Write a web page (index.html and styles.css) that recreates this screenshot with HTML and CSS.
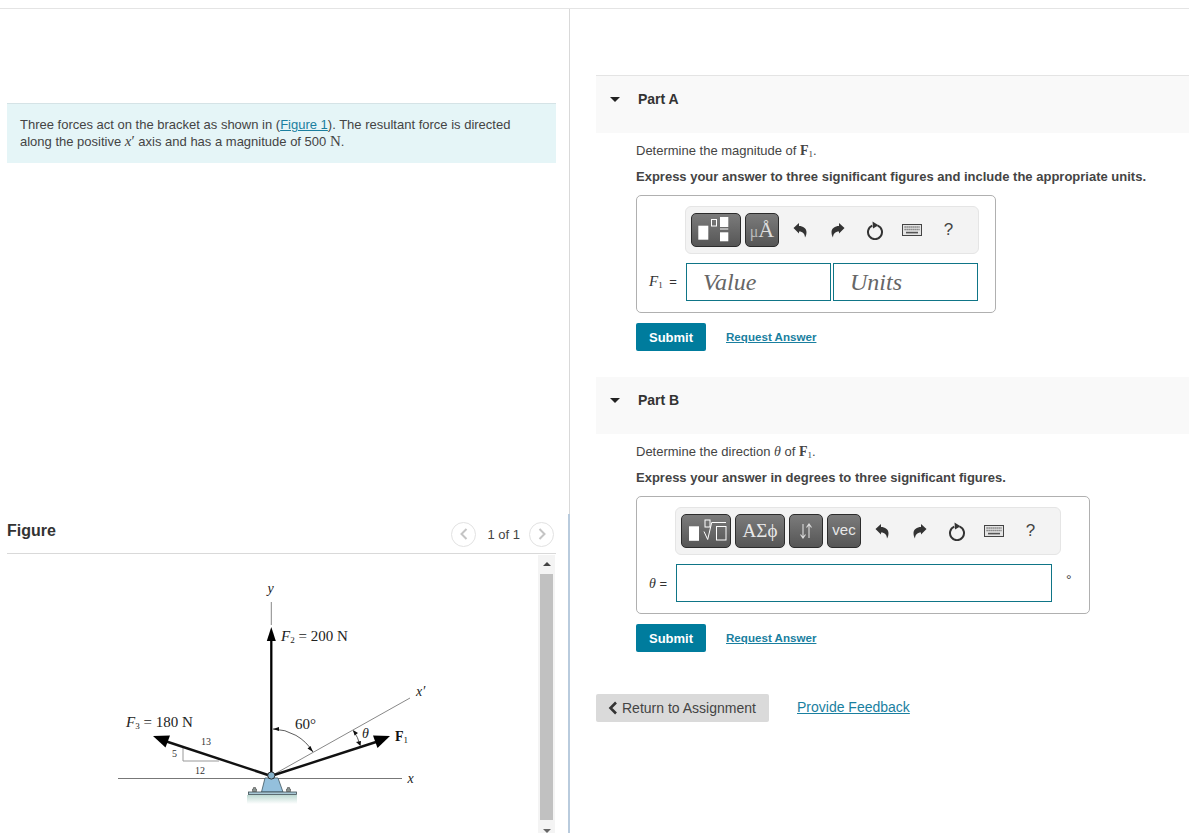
FILE: index.html
```html
<!DOCTYPE html>
<html lang="en">
<head>
<meta charset="utf-8">
<title>Three forces on a bracket</title>
<link rel="stylesheet" href="styles.css">
</head>
<body>
<svg class="defs" width="0" height="0" aria-hidden="true">
  <symbol id="i-undo" viewBox="0 0 14 16"><path d="M0.5 6 L6 1 V4 C10 4 13.500 6.500 13.500 10 C13.500 12 13 14 12 15.500 C11.800 12 10 9.500 6 9.500 V11.500 Z" fill="#333"/></symbol>
  <symbol id="i-redo" viewBox="0 0 14 16"><path d="M13.500 6 L8 1 V4 C4 4 0.500 6.500 0.500 10 C0.500 12 1 14 2 15.500 C2.200 12 4 9.500 8 9.500 V11.500 Z" fill="#333"/></symbol>
  <symbol id="i-reset" viewBox="0 0 18 19"><path d="M6.300 4.700 A7 7 0 1 0 11.700 4.700" fill="none" stroke="#333" stroke-width="2"/><path d="M6.500 0.600 L12.500 4.300 L7 7.400 Z" fill="#333"/></symbol>
  <symbol id="i-kb" viewBox="0 0 20 12"><rect x="0.500" y="0.500" width="19" height="11" fill="#e4e4e4" stroke="#444"/><path d="M2.500 3 H17.500 M2.500 5.500 H17.500" stroke="#666" stroke-width="1.400" stroke-dasharray="1.200 .8"/><path d="M4 8.600 H16" stroke="#555" stroke-width="1.600"/></symbol>
</svg>
<div class="page">
  <section class="left">
    <div class="intro">Three forces act on the bracket as shown in (<a class="link" href="#fig">Figure 1</a>). The resultant force is directed along the positive <span class="math prime"><i>x</i>′</span> axis and has a magnitude of 500 <span class="math big">N</span>.</div>
    <div class="fig-head">
      <h2 class="fig-title">Figure</h2>
      <div class="pager">
        <span class="circle"><svg width="8" height="12" viewBox="0 0 8 12"><path d="M6.500 1 L1.500 6 L6.500 11" fill="none" stroke="#c4c4c4" stroke-width="2"/></svg></span>
        <span class="pager-text">1 of 1</span>
        <span class="circle"><svg width="8" height="12" viewBox="0 0 8 12"><path d="M1.500 1 L6.500 6 L1.500 11" fill="none" stroke="#c4c4c4" stroke-width="2"/></svg></span>
      </div>
    </div>
    <div class="fig-body" id="fig">
      <svg class="diagram" width="533" height="279" viewBox="7 554 533 279">
        <defs><linearGradient id="shadow" x1="0" y1="0" x2="0" y2="1"><stop offset="0" stop-color="#bcd9d2"/><stop offset="1" stop-color="#ffffff"/></linearGradient></defs>
        <path d="M271.300 602 V625" stroke="#888" stroke-width="1"/>
        <path d="M118 778.500 H402" stroke="#777" stroke-width="1"/>
        <path d="M271 776 L410 698" stroke="#888" stroke-width="1"/>
        <path d="M183 748 V761 H219" fill="none" stroke="#999" stroke-width="1"/>
        <path d="M273 729 A48 48 0 0 1 313 752" fill="none" stroke="#333" stroke-width="0.800"/>
        <path d="M273 729 L279 727 L279 731 Z M313 752 L307.500 748.500 L310.500 746 Z" fill="#111"/>
        <path d="M353.500 731 Q358 737 360 745" fill="none" stroke="#333" stroke-width="0.800"/>
        <path d="M353 730 L358 733 L354.500 735.500 Z M360.500 746 L356 742 L361 741 Z" fill="#111"/>
        <path d="M271.300 776 V638" stroke="#000" stroke-width="2.300"/>
        <path d="M271.300 627 L275.800 641 H266.800 Z" fill="#000"/>
        <path d="M271 776 L165 741" stroke="#111" stroke-width="2.400"/>
        <path d="M153 736 L170 735.500 L165.500 747.500 Z" fill="#000"/>
        <path d="M271 776 L376 742" stroke="#111" stroke-width="2.400"/>
        <path d="M390 736 L373 735.500 L377.500 748 Z" fill="#000"/>
        <rect x="247" y="795" width="50" height="9" fill="url(#shadow)"/>
        <path d="M265 778 H278 L283 792 H261.500 Z" fill="#94c0dc" stroke="#3d5560" stroke-width="0.800"/>
        <rect x="248.500" y="792" width="48" height="2.500" fill="#a9c9d6" stroke="#3f4f55" stroke-width="0.800"/>
        <path d="M252.500 791.500 V789 H253.500 V787.500 H255.500 V789 H256.500 V791.500 Z M286.500 791.500 V789 H287.500 V787.500 H289.500 V789 H290.500 V791.500 Z" fill="#8b9692" stroke="#333" stroke-width="0.500"/>
        <circle cx="271.300" cy="775.500" r="3.600" fill="#86b3cc" stroke="#222" stroke-width="0.900"/>
        <text class="d-i" x="267.500" y="593">y</text>
        <text class="d-t" x="281" y="641"><tspan class="d-it">F</tspan><tspan class="d-sub" dy="2">2</tspan><tspan dy="-2"> = 200 N</tspan></text>
        <text class="d-t" x="126" y="727"><tspan class="d-it">F</tspan><tspan class="d-sub" dy="2">3</tspan><tspan dy="-2"> = 180 N</tspan></text>
        <text class="d-s" x="201" y="745">13</text>
        <text class="d-s" x="172" y="757">5</text>
        <text class="d-s" x="195" y="774">12</text>
        <text class="d-t" x="295" y="729">60°</text>
        <text class="d-i" x="362" y="738">θ</text>
        <text class="d-b" x="395" y="741">F<tspan class="d-sub" dy="2">1</tspan></text>
        <text class="d-i" x="416" y="696">x′</text>
        <text class="d-i" x="407.500" y="783">x</text>
      </svg>
      <div class="scrollbar">
        <span class="sb-up"></span>
        <span class="sb-thumb"></span>
        <span class="sb-down"></span>
      </div>
    </div>
  </section>

  <section class="right">
    <div class="part-head part-a"><span class="caret"></span><h3 class="part-title">Part A</h3></div>
    <p class="q">Determine the magnitude of <b class="math lg">F</b><span class="math sub">1</span>.</p>
    <p class="q-b">Express your answer to three significant figures and include the appropriate units.</p>
    <div class="answer answer-a">
      <div class="toolbar tb-a">
        <button class="tbtn w50" type="button" aria-label="templates">
          <svg width="48" height="32" viewBox="0 0 48 32"><rect x="6.300" y="11.700" width="10" height="14" fill="#fff"/><rect x="19.500" y="5.500" width="5" height="6.500" fill="none" stroke="#fff"/><rect x="28" y="3" width="8.300" height="10" fill="#fff"/><path d="M28 15 H36.300" stroke="#fff"/><rect x="28" y="18.300" width="8.300" height="9" fill="#fff"/></svg>
        </button>
        <button class="tbtn w34 serif" type="button"><span class="mu">μ</span><span class="ang">Å</span></button>
        <span class="slot s38"><svg width="14" height="16"><use href="#i-undo"/></svg></span>
        <span class="slot s38"><svg width="14" height="16"><use href="#i-redo"/></svg></span>
        <span class="slot s36"><svg width="18" height="19"><use href="#i-reset"/></svg></span>
        <span class="slot s37"><svg width="20" height="12"><use href="#i-kb"/></svg></span>
        <span class="slot s37 help">?</span>
      </div>
      <div class="row row-a">
        <span class="lbl"><i class="math xl">F</i><span class="math sub">1</span> =</span>
        <input class="field value" type="text" placeholder="Value" aria-label="Value">
        <input class="field units" type="text" placeholder="Units" aria-label="Units">
      </div>
    </div>
    <div class="actions">
      <button class="submit" type="button">Submit</button>
      <a class="request" href="#a">Request Answer</a>
    </div>

    <div class="part-head part-b"><span class="caret"></span><h3 class="part-title">Part B</h3></div>
    <p class="q">Determine the direction <i class="math lg">θ</i> of <b class="math lg">F</b><span class="math sub">1</span>.</p>
    <p class="q-b">Express your answer in degrees to three significant figures.</p>
    <div class="answer answer-b">
      <div class="toolbar tb-b">
        <button class="tbtn w50" type="button" aria-label="templates">
          <svg width="48" height="32" viewBox="0 0 48 32"><rect x="7" y="11.300" width="10" height="14.500" fill="#fff"/><rect x="23" y="5" width="5" height="7" fill="none" stroke="#fff"/><path d="M22 16.500 L25.700 24.500 L29.700 7.500 H44" fill="none" stroke="#fff"/><rect x="34.500" y="11.500" width="9.500" height="13.500" fill="none" stroke="#fff"/></svg>
        </button>
        <button class="tbtn w50 serif greek" type="button">ΑΣϕ</button>
        <button class="tbtn w34" type="button" aria-label="arrows">
          <svg width="14" height="16" viewBox="0 0 14 16"><path d="M4 1 V14 M1.500 11.500 L4 15 L6.500 11.500 M10 15 V2 M7.500 4.500 L10 1 L12.500 4.500" fill="none" stroke="#ddd" stroke-width="1.100"/></svg>
        </button>
        <button class="tbtn w34 vec" type="button">vec</button>
        <span class="slot s38"><svg width="14" height="16"><use href="#i-undo"/></svg></span>
        <span class="slot s38"><svg width="14" height="16"><use href="#i-redo"/></svg></span>
        <span class="slot s36"><svg width="18" height="19"><use href="#i-reset"/></svg></span>
        <span class="slot s37"><svg width="20" height="12"><use href="#i-kb"/></svg></span>
        <span class="slot s37 help">?</span>
      </div>
      <div class="row row-b">
        <span class="lbl lbl-b"><i class="math lg">θ</i> =</span>
        <input class="field wide" type="text" aria-label="theta">
        <span class="deg">°</span>
      </div>
    </div>
    <div class="actions">
      <button class="submit" type="button">Submit</button>
      <a class="request" href="#b">Request Answer</a>
    </div>

    <div class="footer">
      <a class="return" href="#r"><svg width="10" height="14" viewBox="0 0 10 14"><path d="M8 1.500 L2.500 7 L8 12.500" fill="none" stroke="#333" stroke-width="2.600"/></svg>Return to Assignment</a>
      <a class="feedback" href="#f">Provide Feedback</a>
    </div>
  </section>
</div>
</body>
</html>
```
FILE: styles.css
```css
* { box-sizing: border-box; }
html, body { margin: 0; padding: 0; height: 833px; overflow: hidden; background: #fff; }
body { font-family: "Liberation Sans", Arial, sans-serif; color: #333; font-size: 13px; }
.defs { position: absolute; }
.page { margin-top: 8px; border-top: 1px solid #e4e4e4; height: 825px; display: grid; grid-template-columns: 570px 1fr; overflow: hidden; }

.left { padding: 94px 13px 0 7px; border-right: 1px solid #d9d9d9; position: relative; }
.left::after { content: ""; position: absolute; right: -1px; top: 505px; bottom: 0; width: 2px; background: #b9cbdd; }
.intro { height: 60px; background: #e5f5f7; border-top: 1px solid #d5e3e6; padding: 12px 13px; line-height: 17px; font-size: 13px; color: #444; }
.link { color: #1a7f9f; text-decoration: underline; }
.math { font-family: "Liberation Serif", serif; }
.big { display: inline-block; font-size: 15px; line-height: 14px; }
.prime { display: inline-block; font-size: 15px; line-height: 14px; }
.lg { display: inline-block; font-size: 14px; line-height: 14px; }
.xl { display: inline-block; font-size: 15px; line-height: 14px; }
.sub { display: inline-block; font-size: 9px; vertical-align: -2px; line-height: 9px; }

.fig-head { margin-top: 329px; border-bottom: 1px solid #d9d9d9; height: 62px; padding-top: 15px; display: flex; justify-content: space-between; align-items: center; }
.fig-title { margin: 2px 0 0; font-size: 16px; font-weight: 700; color: #333; }
.pager { display: flex; align-items: center; margin: 8px 2px 0 0; }
.circle { width: 25px; height: 25px; border: 1px solid #e2e2e2; border-radius: 50%; display: flex; align-items: center; justify-content: center; }
.pager-text { font-size: 13px; color: #444; margin: 0 9px 0 11px; }

.fig-body { position: relative; height: 279px; }
.diagram { position: absolute; left: 0; top: 0; }
.d-i { font-family: "Liberation Serif", serif; font-style: italic; font-size: 14px; fill: #222; }
.d-t { font-family: "Liberation Serif", serif; font-size: 15px; fill: #222; }
.d-s { font-family: "Liberation Serif", serif; font-size: 10px; fill: #333; }
.d-b { font-family: "Liberation Serif", serif; font-size: 14px; font-weight: 700; fill: #111; }
.d-it { font-family: "Liberation Serif", serif; font-style: italic; font-size: 15px; }
.d-sub { font-size: 9px; font-weight: 400; font-style: normal; }

.scrollbar { position: absolute; left: 531px; top: 1px; width: 17px; bottom: 0; background: #f4f4f4; display: flex; flex-direction: column; align-items: center; }
.sb-up { margin-top: 7px; width: 0; height: 0; border: 4px solid transparent; border-top: 0; border-bottom: 4px solid #444; }
.sb-thumb { margin-top: 8px; width: 13px; flex: 1; background: #c1c1c1; }
.sb-down { margin: 9px 0 0; width: 0; height: 0; border: 4px solid transparent; border-bottom: 0; border-top: 4px solid #666; }

.right { padding: 66px 0 0 26px; min-width: 0; }
.part-head { height: 58px; background: #f9f9f9; border-top: 1px solid #e4e4e4; display: flex; align-items: flex-start; padding: 15px 0 0 14px; }
.part-b { margin-top: 26px; border-top: 0; height: 57px; padding-top: 15px; }
.caret { width: 0; height: 0; margin-top: 6px; border: 5.500px solid transparent; border-bottom: 0; border-top: 5px solid #222; }
.part-title { margin: 0 0 0 17px; padding-left: 1px; font-size: 14px; line-height: 17px; font-weight: 700; color: #333; }
.q { margin: 9px 0 0 40px; font-size: 13px; line-height: 17px; color: #444; }
.q-b { margin: 9px 0 0 40px; font-size: 13px; line-height: 17px; font-weight: 700; color: #444; }

.answer { margin: 10px 0 0 40px; height: 118px; border: 1px solid #b0b0b0; border-radius: 5px; padding-top: 10px; position: relative; }
.answer-a { width: 360px; }
.answer-b { width: 454px; }
.toolbar { height: 48px; background: #f3f3f3; border: 1px solid #e5e5e5; border-radius: 6px; display: flex; align-items: center; padding-left: 5px; }
.tb-a { margin-left: 48px; width: 294px; }
.tb-b { margin-left: 38px; width: 386px; }
.tbtn { height: 34px; padding: 0; margin-right: 4px; border: 1px solid #2c2c2c; border-radius: 5px; background: linear-gradient(#7b7b7b, #565656); color: #e8e8e8; display: flex; align-items: center; justify-content: center; font-family: "Liberation Sans", sans-serif; }
.w50 { width: 50px; }
.w34 { width: 34px; }
.serif { font-family: "Liberation Serif", serif; font-size: 18px; }
.greek { font-size: 19px; }
.vec { font-size: 15px; margin-right: 2px; padding-bottom: 3px; }
.mu { font-size: 16px; color: #b9b9b9; margin-top: 3px; }
.ang { font-size: 22px; color: #ddd; }
.tb-a .w34 { margin-right: 2px; }
.slot { display: flex; justify-content: center; align-items: center; height: 34px; }
.s38 { width: 38px; }
.s36 { width: 36px; }
.s37 { width: 37px; }
.help { font-size: 17px; color: #444; }

.row { display: flex; align-items: center; margin-top: 9px; height: 38px; padding-left: 12px; }
.lbl { width: 37px; font-size: 13px; color: #333; white-space: nowrap; }
.lbl .sub { margin-right: 3px; }
.lbl-b { width: 27px; }
.field { height: 38px; border: 1px solid #0f7587; background: #fff; padding: 0 0 0 16px; font-family: "Liberation Serif", serif; font-style: italic; font-size: 24px; margin: 0; outline: none; border-radius: 0; }
.field::placeholder { color: #666; opacity: 1; }
.value { width: 145px; margin-right: 2px; }
.units { width: 145px; }
.wide { width: 376px; }
.deg { margin-left: 14px; margin-top: -6px; font-size: 14px; color: #444; }

.actions { display: flex; align-items: center; margin: 10px 0 0 40px; height: 28px; }
.submit { width: 70px; height: 28px; border: 0; border-radius: 2px; background: #007c9d; color: #fff; font-family: "Liberation Sans", sans-serif; font-size: 13px; font-weight: 700; padding: 0; }
.request { margin: -2px 0 0 20px; color: #1a7f9f; font-size: 11.600px; font-weight: 700; text-decoration: underline; }

.footer { display: flex; align-items: center; margin-top: 42px; height: 28px; }
.return { width: 173px; height: 28px; background: #dadada; border-radius: 2px; display: flex; align-items: center; gap: 4px; padding-left: 12px; font-size: 14px; color: #444; text-decoration: none; }
.feedback { margin: -2px 0 0 28px; font-size: 14px; color: #1a7f9f; text-decoration: underline; }
```
